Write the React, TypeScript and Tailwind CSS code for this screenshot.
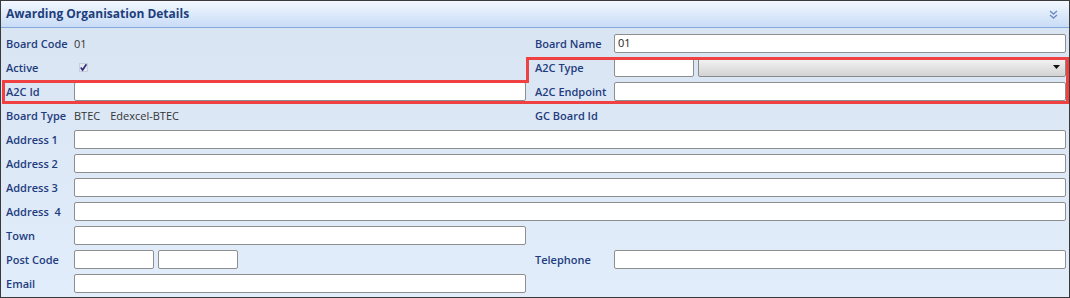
import React from 'react';

const font = { fontFamily: '"Open Sans", "Noto Sans", sans-serif' };

const Label: React.FC<{ text: string }> = ({ text }) => (
  <div className="text-[11px] font-semibold text-[#1f3c7e] whitespace-pre leading-none">{text}</div>
);

const Field: React.FC<{ value?: string; className?: string }> = ({ value = '', className = '' }) => (
  <div
    className={`h-[19px] bg-white border border-[#8e8e8e] rounded-[2px] px-[3px] flex items-center text-[11px] text-[#222] ${className}`}
  >
    {value}
  </div>
);

const Row: React.FC<{ children: React.ReactNode }> = ({ children }) => (
  <div className="grid grid-cols-[68px_452px_9px_79px_452px] items-center h-[24px]">{children}</div>
);

const Check = () => (
  <svg width="9" height="9" viewBox="0 0 9 9" className="ml-[5px]">
    <rect x="0.5" y="0.5" width="8" height="8" fill="#e4e8f0" stroke="#c9ced8" />
    <path d="M1.8 4.6 L3.6 7 L7.4 1.2" fill="none" stroke="#2e2a7a" strokeWidth="1.6" />
  </svg>
);

const Chevrons = () => (
  <svg width="9" height="9" viewBox="0 0 9 9">
    <path d="M1 1 L4.5 4 L8 1 M1 5 L4.5 8 L8 5" fill="none" stroke="#6d8cc4" strokeWidth="1.4" />
  </svg>
);

export default function App() {
  return (
    <div className="relative w-[1070px] h-[298px] border border-[#3a3a3a] bg-gradient-to-b from-[#d9e4f2] to-[#e1edfb]" style={font}>
      {/* header */}
      <div className="h-[27px] flex items-center justify-between pl-[5px] pr-[11px] bg-gradient-to-b from-[#f3f8ff] to-[#c8dcf6] border-b border-[#86a9dc]">
        <span className="text-[12px] font-bold text-[#1d3f7c]">Awarding Organisation Details</span>
        <Chevrons />
      </div>

      <div className="pl-[5px] pr-[2px] pt-[3px]">
        <Row>
          <Label text="Board Code" />
          <span className="text-[11px] text-[#333] leading-none">01</span>
          <span />
          <Label text="Board Name" />
          <Field value="01" />
        </Row>
        <Row>
          <Label text="Active" />
          <Check />
          <span />
          <Label text="A2C Type" />
          <div className="flex gap-[4px]">
            <Field className="w-[80px]" />
            <div className="flex-1 h-[19px] border border-[#8a8a8a] rounded-[2px] bg-gradient-to-b from-[#f3f3f3] to-[#d3d3d3] flex items-center justify-end pr-[5px]">
              <svg width="7" height="4" viewBox="0 0 7 4">
                <path d="M0 0 H7 L3.5 4 Z" fill="#111" />
              </svg>
            </div>
          </div>
        </Row>
        <Row>
          <Label text="A2C Id" />
          <Field />
          <span />
          <Label text="A2C Endpoint" />
          <Field />
        </Row>
        <Row>
          <Label text="Board Type" />
          <div className="flex gap-[10px] text-[11px] text-[#333] leading-none">
            <span>BTEC</span>
            <span>Edexcel-BTEC</span>
          </div>
          <span />
          <Label text="GC Board Id" />
          <span />
        </Row>
        {['Address 1', 'Address 2', 'Address 3', 'Address  4'].map((a) => (
          <Row key={a}>
            <Label text={a} />
            <Field className="col-span-4" />
          </Row>
        ))}
        <Row>
          <Label text="Town" />
          <Field />
        </Row>
        <Row>
          <Label text="Post Code" />
          <div className="flex gap-[4px]">
            <Field className="w-[80px]" />
            <Field className="w-[80px]" />
          </div>
          <span />
          <Label text="Telephone" />
          <Field />
        </Row>
        <Row>
          <Label text="Email" />
          <Field />
        </Row>
      </div>

      {/* annotation outline */}
      <svg className="absolute left-0 top-0 pointer-events-none" width="1070" height="298">
        <path d="M2.5 80.5 H526.5 V57.5 H1066.5 V101.5 H2.5 Z" fill="none" stroke="#ef4141" strokeWidth="3" />
      </svg>
    </div>
  );
}
